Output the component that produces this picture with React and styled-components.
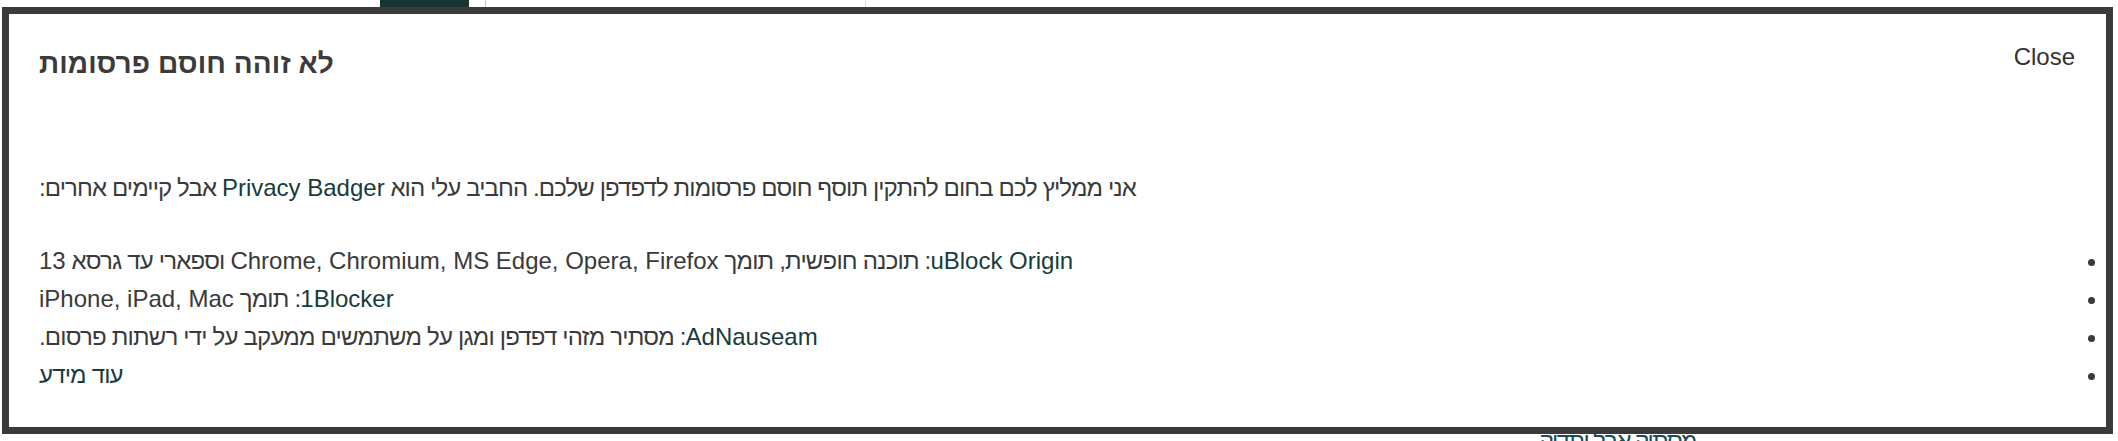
import styled, { createGlobalStyle } from 'styled-components';

const GlobalStyle = createGlobalStyle`
  html, body {
    margin: 0;
    padding: 0;
    background: #fff;
  }
  body {
    font-family: "Liberation Sans", Arial, sans-serif;
    overflow: hidden;
  }
`;

const Page = styled.div`
  width: 2118px;
  height: 441px;
  position: relative;
  overflow: hidden;
`;

const TopStrip = styled.div`
  display: flex;
  height: 8px;
  padding-left: 380px;
`;

const NavBlock = styled.div`
  width: 89px;
  background: #163434;
`;

const NavLine = styled.div`
  width: 1px;
  margin-left: ${({ $gap }) => $gap}px;
  background: ${({ $color }) => $color};
`;

const PageText = styled.p`
  direction: rtl;
  margin: 419px 422px 0 0;
  font-size: 24px;
  line-height: 28px;
  letter-spacing: -1.6px;
  color: #1b4a5a;
`;

const Modal = styled.div`
  position: fixed;
  top: 7px;
  left: 2px;
  right: 5px;
  bottom: 7px;
  border: 7px solid #3b3b3b;
  background: #fff;
  padding: 0 31px 0 30px;
  color: #3a3a3a;
`;

const Header = styled.div`
  display: flex;
  justify-content: space-between;
  align-items: flex-start;
  padding-top: 32px;
`;

const Title = styled.h2`
  direction: rtl;
  margin: 0;
  font-size: 28px;
  line-height: 36px;
  font-weight: bold;
  letter-spacing: 0.1px;
  color: #3b3b3b;
`;

const CloseButton = styled.button`
  border: 0;
  background: none;
  padding: 0;
  margin-top: -1px;
  font-family: "Liberation Sans", Arial, sans-serif;
  font-size: 24px;
  line-height: 24px;
  color: #333;
  cursor: pointer;
`;

// Hebrew runs are set a bit tighter; latin runs keep normal spacing
const Body = styled.div`
  direction: rtl;
  text-align: left;
  font-size: 24px;
  line-height: 38px;
  letter-spacing: -0.8px;
`;

const Latin = styled.span`
  letter-spacing: 0;
`;

const Paragraph = styled.p`
  margin: 87px 0 0;
  letter-spacing: -0.88px;
`;

const List = styled.ul`
  margin: 35px 0 0;
  padding: 0 1px 0 0;
  list-style: disc outside;
`;

const Item = styled.li`
  line-height: 38px;
`;

const Link = styled.a`
  color: #173c3c;
  text-decoration: none;
  letter-spacing: ${({ $he }) => ($he ? '-0.8px' : '0')};
`;

const App = () => (
  <>
    <GlobalStyle />
    <Page>
      <TopStrip>
        <NavBlock />
        <NavLine $gap={16} $color="#9fd3d8" />
        <NavLine $gap={379} $color="#dddddd" />
      </TopStrip>
      <PageText>מסתיק אבל ותדוק</PageText>
    </Page>
    <Modal>
      <Header>
        <Title>לא זוהה חוסם פרסומות</Title>
        <CloseButton>Close</CloseButton>
      </Header>
      <Body>
        <Paragraph>
          אני ממליץ לכם בחום להתקין תוסף חוסם פרסומות לדפדפן שלכם. החביב עלי הוא <Link href="#">Privacy Badger</Link> אבל קיימים אחרים:
        </Paragraph>
        <List>
          <Item>
            <Link href="#">uBlock Origin</Link>: תוכנה חופשית, תומך <Latin>Chrome, Chromium, MS Edge, Opera, Firefox</Latin> וספארי עד גרסא <Latin>13</Latin>
          </Item>
          <Item>
            <Link href="#">1Blocker</Link>: תומך <Latin>iPhone, iPad, Mac</Latin>
          </Item>
          <Item>
            <Link href="#">AdNauseam</Link>: מסתיר מזהי דפדפן ומגן על משתמשים ממעקב על ידי רשתות פרסום.
          </Item>
          <Item>
            <Link href="#" $he>עוד מידע</Link>
          </Item>
        </List>
      </Body>
    </Modal>
  </>
);

export default App;
